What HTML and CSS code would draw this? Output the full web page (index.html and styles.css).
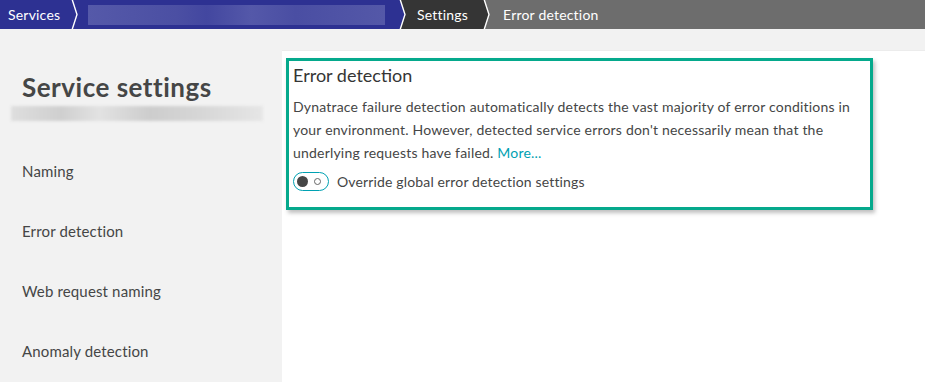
FILE: index.html
```html
<!DOCTYPE html>
<html>
<head>
<meta charset="utf-8">
<link rel="stylesheet" href="styles.css">
</head>
<body>
<nav class="crumbs">
  <div class="crumb crumb-blue crumb-first">Services</div>
  <svg class="sep" width="10" height="29" viewBox="0 0 10 29"><rect width="10" height="29" fill="#2d3192"/><polyline points="3,-1 8,14.5 3,30" fill="none" stroke="#fff" stroke-width="1.4"/></svg>
  <div class="crumb crumb-blue crumb-blurred"><span class="blurbox"></span></div>
  <svg class="sep" width="10" height="29" viewBox="0 0 10 29"><polygon points="0,0 3,0 8,14.5 3,29 0,29" fill="#2d3192"/><polygon points="3,0 10,0 10,29 3,29 8,14.5" fill="#353535"/><polyline points="3,-1 8,14.5 3,30" fill="none" stroke="#fff" stroke-width="1.4"/></svg>
  <div class="crumb crumb-dark">Settings</div>
  <svg class="sep" width="10" height="29" viewBox="0 0 10 29"><polygon points="0,0 3,0 8,14.5 3,29 0,29" fill="#353535"/><polygon points="3,0 10,0 10,29 3,29 8,14.5" fill="#6d6d6d"/><polyline points="3,-1 8,14.5 3,30" fill="none" stroke="#fff" stroke-width="1.4"/></svg>
  <div class="crumb crumb-gray">Error detection</div>
</nav>
<div class="layout">
  <aside class="sidebar">
    <h1 class="side-title">Service settings</h1>
    <div class="side-blur"></div>
    <ul class="side-nav">
      <li>Naming</li>
      <li>Error detection</li>
      <li>Web request naming</li>
      <li>Anomaly detection</li>
    </ul>
  </aside>
  <main class="content">
    <section class="card">
      <h2 class="card-title">Error detection</h2>
      <p class="card-text">Dynatrace failure detection automatically detects the vast majority of error conditions in your environment. However, detected service errors don't necessarily mean that the underlying requests have failed. <a class="more">More...</a></p>
      <div class="toggle-row">
        <span class="toggle"><span class="knob"></span><span class="ring"></span></span>
        <span class="toggle-label">Override global error detection settings</span>
      </div>
    </section>
  </main>
</div>
</body>
</html>
```
FILE: styles.css
```css
* { box-sizing: border-box; }
html, body { margin: 0; padding: 0; }
body {
  width: 925px;
  height: 382px;
  overflow: hidden;
  background: #f2f2f2;
  font-family: Lato, "Open Sans", sans-serif;
  color: #454646;
}
.crumbs {
  display: flex;
  height: 29px;
  background: #6d6d6d;
}
.crumb {
  height: 29px;
  display: flex;
  align-items: center;
  color: #fff;
  font-size: 14px;
  letter-spacing: 0.2px;
  white-space: nowrap;
}
.sep { display: block; flex: none; }
.crumb-blue { background: #2d3192; }
.crumb-first { padding: 0 10px 0 8px; width: 69px; }
.crumb-blurred { width: 318px; padding: 0 0 0 9px; }
.blurbox {
  display: block;
  width: 297px;
  height: 20px;
  background: linear-gradient(90deg, #5559a9 0%, #4b4fa3 30%, #4347a0 40%, #5458a9 55%, #4a4ea3 70%, #5458a8 100%);
}
.crumb-dark { background: #353535; padding: 0 13px 0 10px; }
.crumb-gray { padding-left: 12px; flex: 1; }

.layout {
  display: flex;
  height: 353px;
  overflow: hidden;
}
.sidebar {
  width: 282px;
  flex: none;
  padding: 41px 0 0 22px;
}
.side-title {
  margin: 0;
  font-size: 26px;
  font-weight: 700;
  color: #454646;
  line-height: 34px;
  letter-spacing: 0.5px;
}
.side-blur {
  margin: 2px 0 0 -11px;
  width: 252px;
  height: 15px;
  background: linear-gradient(90deg, #dedede 0%, #cfcfcf 20%, #e2e2e2 35%, #cdcdcd 55%, #d6d6d6 75%, #e6e6e6 100%);
  filter: blur(1.5px);
}
.side-nav {
  list-style: none;
  margin: 40px 0 0;
  padding: 0;
  display: flex;
  flex-direction: column;
  gap: 40px;
}
.side-nav li {
  font-size: 15px;
  line-height: 20px;
  letter-spacing: 0.15px;
}
.content {
  flex: 1;
  background: #fff;
  margin-top: 21px;
  padding: 7px 0 0 4px;
  border-top: 1px solid #ececec;
}
.card {
  width: 587px;
  height: 152px;
  border: 3px solid #05a98c;
  box-shadow: 2px 3px 4px rgba(0,0,0,0.25);
  padding: 3px 0 0 4px;
}
.card-title {
  margin: 0;
  font-size: 18px;
  font-weight: 400;
  line-height: 22px;
  color: #353535;
}
.card-text {
  margin: 9px 0 0;
  max-width: 566px;
  font-size: 14px;
  line-height: 23px;
  letter-spacing: 0.2px;
  color: #454646;
}
.more { color: #00a1b2; }
.toggle-row {
  display: flex;
  align-items: center;
  margin-top: 8px;
}
.toggle {
  width: 36px;
  height: 19px;
  border: 1.5px solid #00a1b2;
  border-radius: 10px;
  display: flex;
  align-items: center;
  padding-left: 3px;
  gap: 6px;
}
.knob {
  width: 11px;
  height: 11px;
  border-radius: 50%;
  background: #454646;
}
.ring {
  width: 7px;
  height: 7px;
  border-radius: 50%;
  border: 1.3px solid #666;
}
.toggle-label {
  margin-left: 8px;
  font-size: 14px;
  letter-spacing: 0.15px;
}
```
